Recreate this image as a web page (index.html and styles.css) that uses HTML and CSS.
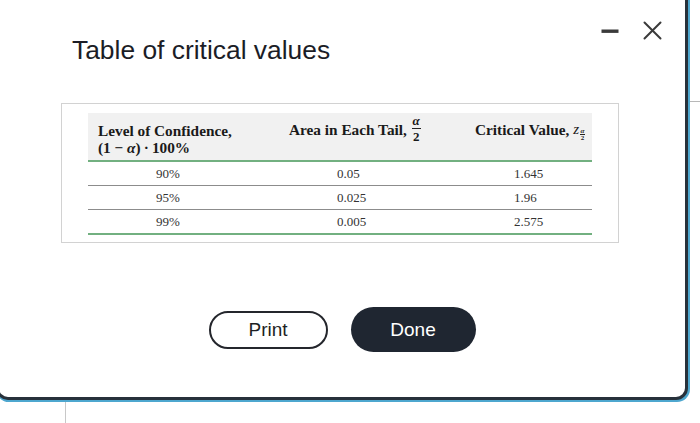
FILE: index.html
```html
<!DOCTYPE html>
<html lang="en">
<head>
<meta charset="utf-8">
<title>Table of critical values</title>
<link rel="stylesheet" href="styles.css">
</head>
<body>
<div class="page">
  <div class="page-vline"></div>
  <div class="page-hline"></div>
  <div class="dialog" role="dialog">
    <div class="dlg-header">
      <h1 class="dlg-title">Table of critical values</h1>
      <div class="dlg-controls">
        <button class="icon-btn" aria-label="Minimize">
          <svg width="18" height="18" viewBox="0 0 18 18"><rect x="0.5" y="7.5" width="17" height="3.4" fill="#3a3a3a"/></svg>
        </button>
        <button class="icon-btn" aria-label="Close">
          <svg width="19" height="19" viewBox="0 0 19 19"><path d="M1.5 1.5 L17.5 17.5 M17.5 1.5 L1.5 17.5" stroke="#3a3a3a" stroke-width="2" stroke-linecap="round" fill="none"/></svg>
        </button>
      </div>
    </div>

    <div class="figure">
      <div class="ctable">
        <div class="thead">
          <div class="th th1">Level of Confidence,<br>(1 &minus; <i>&alpha;</i>)&thinsp;&middot;&thinsp;100%</div>
          <div class="th th2">Area in Each Tail,&nbsp;<span class="frac"><i>&alpha;</i><span class="bar"></span><span>2</span></span></div>
          <div class="th th3">Critical Value,&nbsp;<i class="z">z</i><span class="sub"><i>&alpha;</i><span class="bar"></span><span>2</span></span></div>
        </div>
        <div class="trow">
          <div class="td td1">90%</div><div class="td td2">0.05</div><div class="td td3">1.645</div>
        </div>
        <div class="trow">
          <div class="td td1">95%</div><div class="td td2">0.025</div><div class="td td3">1.96</div>
        </div>
        <div class="trow last">
          <div class="td td1">99%</div><div class="td td2">0.005</div><div class="td td3">2.575</div>
        </div>
      </div>
    </div>

    <div class="dlg-actions">
      <button class="btn btn-outline">Print</button>
      <button class="btn btn-dark">Done</button>
    </div>
  </div>
</div>
</body>
</html>
```

FILE: styles.css
```css
html, body {
  margin: 0;
  padding: 0;
  background: #ffffff;
}
.page {
  position: relative;
  width: 700px;
  height: 423px;
  overflow: hidden;
  background: #ffffff;
  font-family: "Liberation Sans", Arial, sans-serif;
}
.page-vline {
  position: absolute;
  left: 65px;
  top: 402px;
  width: 1px;
  height: 21px;
  background: #c8c8c8;
}
.page-hline {
  position: absolute;
  left: 688px;
  top: 101px;
  width: 12px;
  height: 1px;
  background: #b8b8b8;
}
.dialog {
  position: absolute;
  left: -4px;
  top: -12px;
  width: 686px;
  height: 406px;
  background: #ffffff;
  border: 3px solid #27313b;
  border-radius: 12px;
  box-shadow: 1px 1px 0 1px #4ea7cf;
  display: flex;
  flex-direction: column;
}
.dlg-header {
  display: flex;
  align-items: flex-start;
  justify-content: space-between;
  padding: 44px 23px 0 73px;
}
.dlg-title {
  margin: 0;
  font-family: "Liberation Sans", Arial, sans-serif;
  font-weight: 400;
  font-size: 26.4px;
  line-height: 30px;
  color: #1b1d26;
}
.dlg-controls {
  display: flex;
  align-items: center;
  gap: 24px;
  margin-top: -14px;
}
.icon-btn {
  border: 0;
  background: none;
  padding: 0;
  width: 19px;
  height: 19px;
  display: flex;
  align-items: center;
  justify-content: center;
}
.figure {
  margin: 38px 0 0 62px;
  width: 558px;
  height: 140px;
  border: 1px solid #d2d2d2;
  padding: 9px 0 0 26px;
  box-sizing: border-box;
}
.ctable {
  width: 504px;
  font-family: "Liberation Serif", "Times New Roman", serif;
  color: #222;
}
.thead {
  display: grid;
  grid-template-columns: 160px 192px 152px;
  height: 47px;
  background: #f1f1f1;
  border-bottom: 2px solid #72b080;
  align-items: start;
}
.th {
  font-weight: 700;
  font-size: 15.3px;
  line-height: 17px;
  color: #1a1a1a;
}
.th1 {
  padding: 9px 0 0 10px;
}
.th2, .th3 {
  display: flex;
  align-items: center;
  height: 32px;
}
.th2 {
  padding-left: 41px;
}
.th3 {
  padding-left: 35px;
}
.frac {
  display: inline-flex;
  flex-direction: column;
  align-items: center;
  font-size: 13px;
  line-height: 12px;
  margin-left: 1px;
}
.frac .bar {
  width: 9px;
  height: 1px;
  background: #222;
  margin: 1px 0 2px;
}
.z {
  font-weight: 400;
  font-size: 15px;
}
.sub {
  display: inline-flex;
  flex-direction: column;
  align-items: center;
  font-size: 7px;
  line-height: 6px;
  margin-top: 10px;
  margin-left: 1px;
}
.sub .bar {
  width: 5px;
  height: 1px;
  background: #222;
}
.trow {
  display: grid;
  grid-template-columns: 160px 192px 152px;
  height: 23px;
  border-bottom: 1px solid #8c8c8c;
  align-items: center;
}
.trow.last {
  border-bottom: 2px solid #72b080;
}
.td {
  font-size: 13px;
  line-height: 15px;
  color: #333;
}
.td1 {
  text-align: center;
}
.td2 {
  padding-left: 89px;
}
.td3 {
  padding-left: 74px;
}
.dlg-actions {
  display: flex;
  justify-content: center;
  align-items: center;
  gap: 23px;
  margin-top: 64px;
}
.btn {
  font-family: "Liberation Sans", Arial, sans-serif;
  font-size: 19px;
  border-radius: 999px;
  cursor: pointer;
}
.btn-outline {
  width: 119px;
  height: 38px;
  background: #ffffff;
  border: 2px solid #24262c;
  color: #1e1f24;
}
.btn-dark {
  width: 125px;
  height: 45px;
  background: #1f2631;
  border: 0;
  color: #ffffff;
}
```
